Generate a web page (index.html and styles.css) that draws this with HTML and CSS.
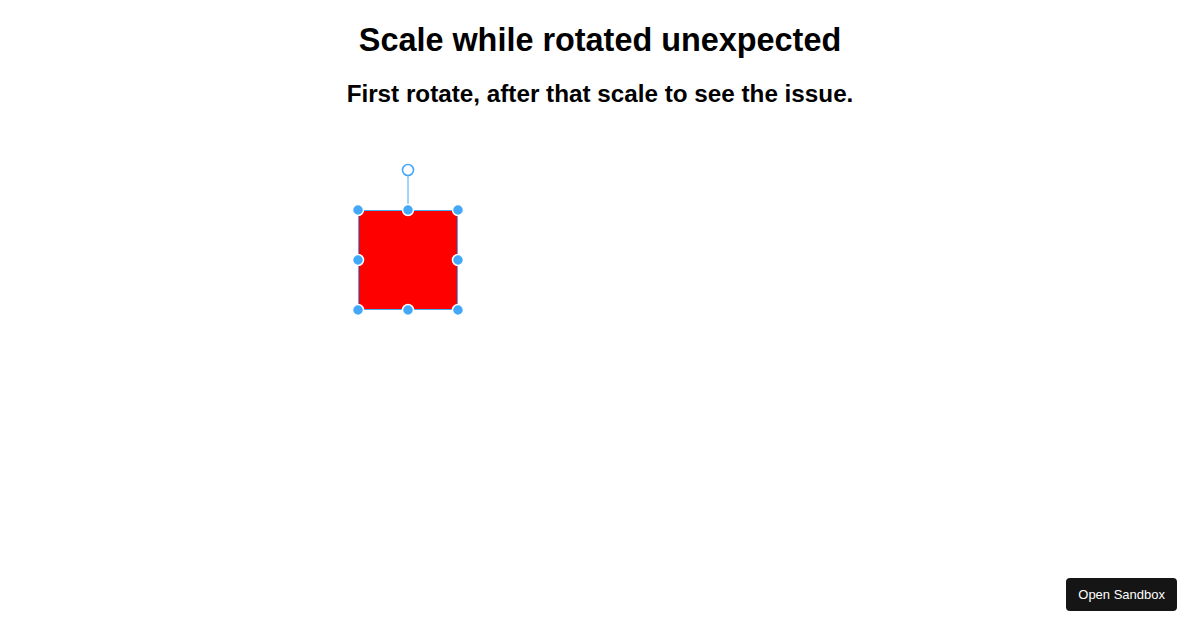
FILE: index.html
```html
<!DOCTYPE html>
<html>
<head>
<meta charset="utf-8">
<link rel="stylesheet" href="styles.css">
</head>
<body>
<h1 class="title">Scale while rotated unexpected</h1>
<h2 class="subtitle">First rotate, after that scale to see the issue.</h2>
<div class="stage">
  <svg class="canvas" width="1184" height="300" viewBox="0 0 1184 300" xmlns="http://www.w3.org/2000/svg">
    <g transform="translate(-8,-128)">
      <rect x="358" y="210" width="100" height="100" fill="#ff0000"/>
      <rect x="358.5" y="210.5" width="99" height="99" fill="none" stroke="#44a8f8" stroke-width="1"/>
      <line x1="408" y1="175.5" x2="408" y2="210" stroke="#44a8f8" stroke-width="1"/>
      <circle cx="408" cy="170" r="5.5" fill="#ffffff" stroke="#44a8f8" stroke-width="1.6"/>
      <g fill="#44a8f8" stroke="#ffffff" stroke-width="1.5">
        <circle cx="358" cy="210" r="5.5"/>
        <circle cx="408" cy="210" r="5.5"/>
        <circle cx="458" cy="210" r="5.5"/>
        <circle cx="358" cy="260" r="5.5"/>
        <circle cx="458" cy="260" r="5.5"/>
        <circle cx="358" cy="310" r="5.5"/>
        <circle cx="408" cy="310" r="5.5"/>
        <circle cx="458" cy="310" r="5.5"/>
      </g>
    </g>
  </svg>
</div>
<a class="sandbox-btn">Open Sandbox</a>
</body>
</html>
```
FILE: styles.css
```css
body {
  margin: 8px;
  font-family: "Liberation Sans", Arial, sans-serif;
  background: #ffffff;
  color: #000000;
}
.title {
  font-size: 32.4px;
  font-weight: bold;
  text-align: center;
  margin: 14px 0 21.44px;
}
.subtitle {
  font-size: 24.25px;
  font-weight: bold;
  text-align: center;
  margin: 20.5px 0 19.92px;
}
.stage {
  display: block;
}
.canvas {
  display: block;
}
.sandbox-btn {
  position: fixed;
  right: 23px;
  bottom: 19px;
  background: #151515;
  color: #ffffff;
  font-family: "Liberation Sans", Arial, sans-serif;
  font-size: 13px;
  line-height: 15px;
  padding: 9px 12px;
  border-radius: 4px;
  cursor: pointer;
}
```
